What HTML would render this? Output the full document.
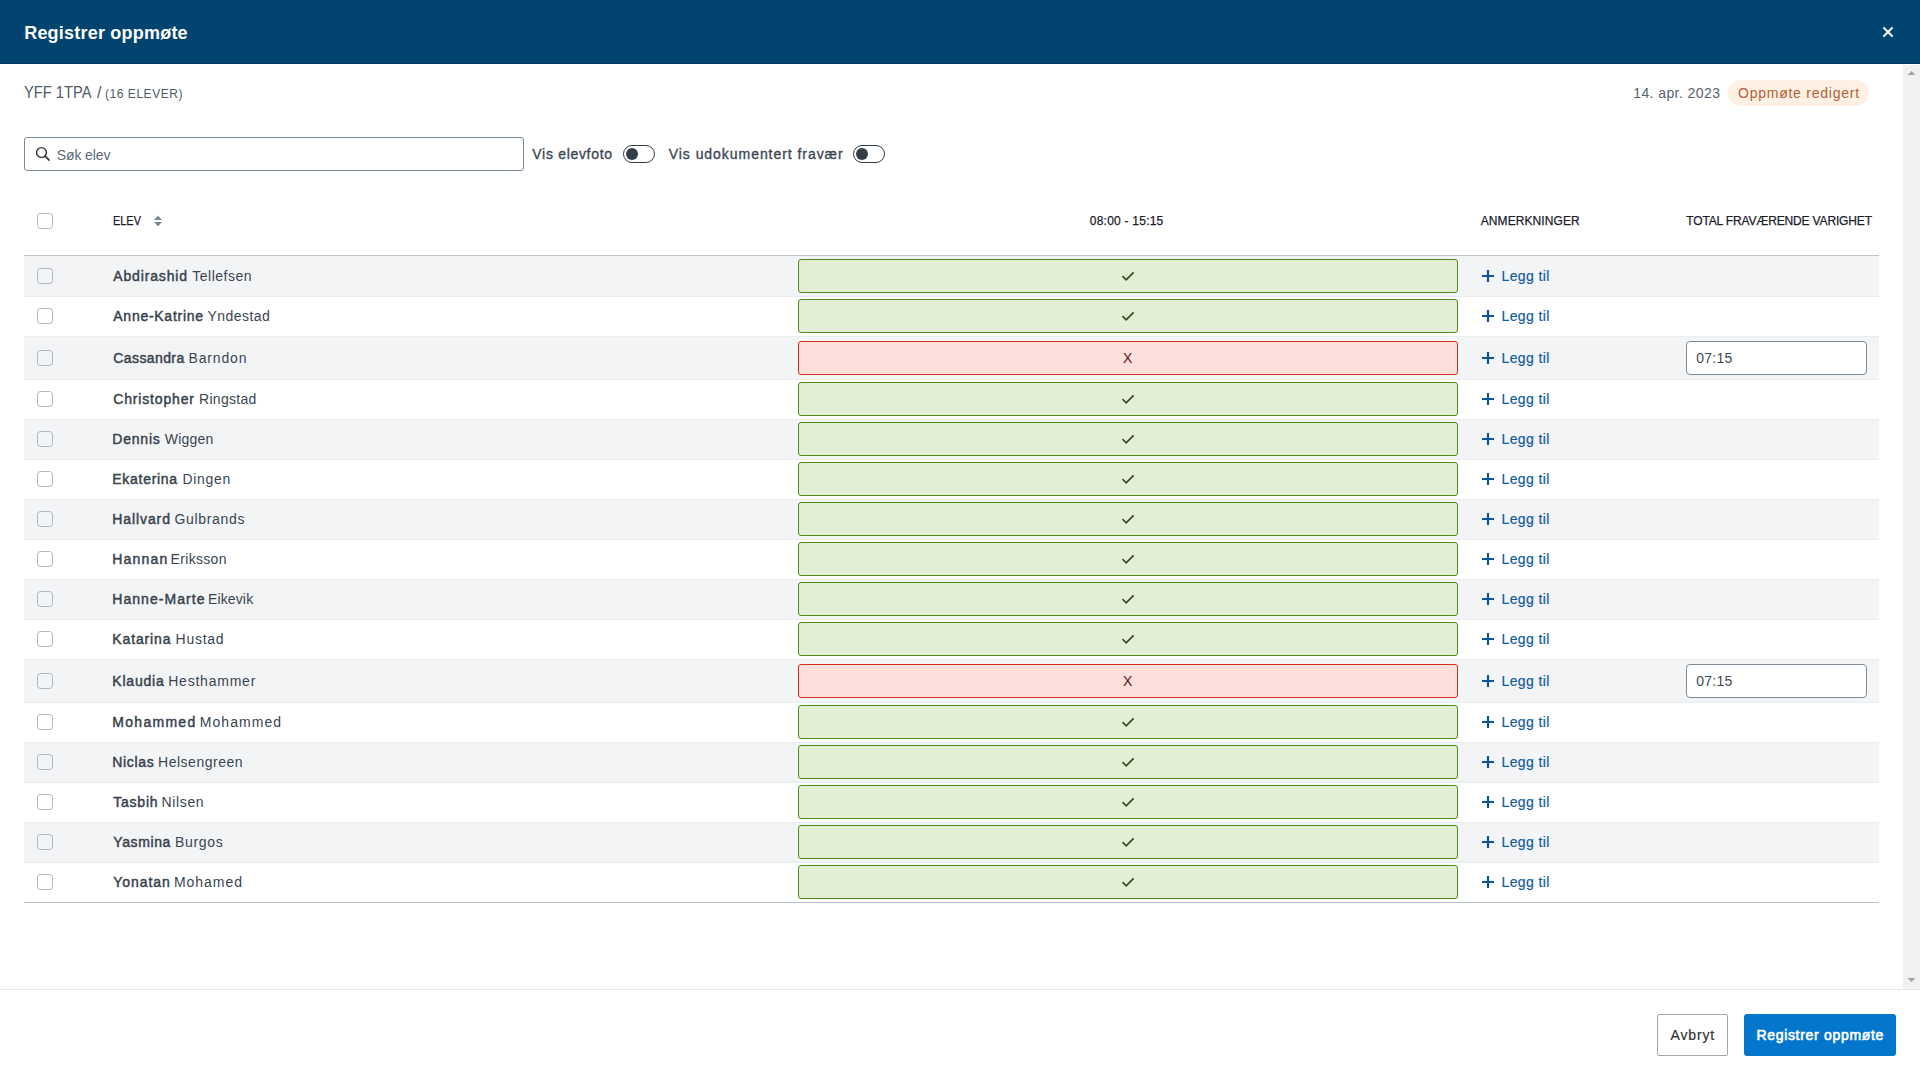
<!DOCTYPE html>
<html><head><meta charset="utf-8"><style>
*{margin:0;padding:0;box-sizing:border-box}
html,body{width:1920px;height:1080px;overflow:hidden;background:#fff;font-family:"Liberation Sans",sans-serif}
.a{position:absolute;white-space:nowrap}
.t{position:absolute;white-space:nowrap;line-height:1}
#hdr{left:0;top:0;width:1920px;height:64px;background:#01446f;border-bottom:1px solid #00335e}
.row{position:absolute;left:24px;width:1855px}
.cb{position:absolute;left:37px;width:16px;height:16px;border:1px solid #b2b6bb;border-radius:3.5px}
.st{position:absolute;left:798px;width:660px;height:34px;border-radius:3px}
.ok{background:#e2efd4;border:1px solid #4e8a16}
.ab{background:#fde0dc;border:1px solid #d3301c}
.inp{position:absolute;left:1686px;width:181px;height:34px;border:1px solid #7d8b99;border-radius:4px;background:#fff}
</style></head><body>
<div id="hdr" class="a"></div>
<div class="t" style="left:24.20px;top:23.76px;font-size:18px;font-weight:bold;letter-spacing:0.213px;color:#fff;">Registrer oppmøte</div>
<svg class="a" style="left:1881px;top:25px" width="14" height="14" viewBox="0 0 14 14"><path d="M3 3L11 11M11 3L3 11" stroke="#fff" stroke-width="2.1" stroke-linecap="round"/></svg>
<div class="t" style="left:24.00px;top:84.96px;font-size:16px;letter-spacing:0.000px;color:#4f5b66;transform:scaleX(0.9181);transform-origin:0 0;">YFF 1TPA</div>
<div class="t" style="left:96.90px;top:84.96px;font-size:16px;letter-spacing:0.000px;color:#4f5b66;">/</div>
<div class="t" style="left:105.00px;top:87.54px;font-size:12px;letter-spacing:0.540px;color:#4f5b66;">(16 ELEVER)</div>
<div class="t" style="left:1633.20px;top:85.85px;font-size:14px;letter-spacing:0.417px;color:#56636e;">14. apr. 2023</div>
<div class="a" style="left:1728px;top:80px;width:141px;height:26px;border-radius:13px;background:#fef1e3"></div>
<div class="t" style="left:1738.00px;top:85.85px;font-size:14px;letter-spacing:0.756px;color:#b0623a;">Oppmøte redigert</div>
<div class="a" style="left:24px;top:137px;width:500px;height:34px;border:1px solid #7a8a9a;border-radius:3px"></div>
<svg class="a" style="left:35px;top:146px" width="16" height="16" viewBox="0 0 16 16"><circle cx="6.5" cy="6.5" r="4.9" fill="none" stroke="#2f3236" stroke-width="1.4"/><path d="M10.1 10.1L14.1 14.1" stroke="#2f3236" stroke-width="1.6" stroke-linecap="round"/></svg>
<div class="t" style="left:56.70px;top:148.15px;font-size:14px;letter-spacing:-0.096px;color:#5b6b79;">Søk elev</div>
<div class="t" style="left:532.30px;top:146.95px;font-size:14px;-webkit-text-stroke:0.35px #3d4954;letter-spacing:0.694px;color:#3d4954;">Vis elevfoto</div>
<div class="a" style="left:623px;top:145px;width:32px;height:18px;border:1.5px solid #323d47;border-radius:9px;background:#fff"></div>
<div class="a" style="left:626px;top:148px;width:12px;height:12px;border-radius:6px;background:#323d47"></div>
<div class="t" style="left:668.75px;top:146.95px;font-size:14px;-webkit-text-stroke:0.35px #3d4954;letter-spacing:0.950px;color:#3d4954;">Vis udokumentert fravær</div>
<div class="a" style="left:853px;top:145px;width:32px;height:18px;border:1.5px solid #323d47;border-radius:9px;background:#fff"></div>
<div class="a" style="left:856px;top:148px;width:12px;height:12px;border-radius:6px;background:#323d47"></div>
<div class="cb a" style="top:213px"></div>
<div class="t" style="left:113.00px;top:214.84px;font-size:12px;-webkit-text-stroke:0.25px #1c1c2b;letter-spacing:0.000px;color:#1c1c2b;transform:scaleX(0.9095);transform-origin:0 0;">ELEV</div>
<svg class="a" style="left:153px;top:215px" width="10" height="12" viewBox="0 0 10 12"><path d="M1 5L5 0.8L9 5Z M1 7L5 11.2L9 7Z" fill="#7b8591"/></svg>
<div class="t" style="left:1089.75px;top:214.64px;font-size:12px;-webkit-text-stroke:0.25px #1c1c2b;letter-spacing:0.234px;color:#1c1c2b;">08:00 - 15:15</div>
<div class="t" style="left:1480.75px;top:214.84px;font-size:12px;-webkit-text-stroke:0.25px #1c1c2b;letter-spacing:0.082px;color:#1c1c2b;">ANMERKNINGER</div>
<div class="t" style="left:1686.25px;top:214.84px;font-size:12px;-webkit-text-stroke:0.25px #1c1c2b;letter-spacing:-0.150px;color:#1c1c2b;">TOTAL FRAVÆRENDE VARIGHET</div>
<div class="a" style="left:24px;top:255px;width:1855px;height:1px;background:#bcc3cb"></div>
<div class="row" style="top:256px;height:40px;background:#f3f4f6"></div>
<div class="cb a" style="top:268px"></div>
<div class="t" style="left:113.30px;top:268.95px;font-size:14px;-webkit-text-stroke:0.45px #37424c;letter-spacing:0.840px;color:#37424c;">Abdirashid</div>
<div class="t" style="left:192.20px;top:268.95px;font-size:14px;letter-spacing:0.525px;color:#3a4550;">Tellefsen</div>
<div class="st a ok" style="top:259px"></div>
<svg class="a" style="left:1120px;top:269.5px" width="16" height="12" viewBox="0 0 16 12"><path d="M2.5 6.2L6.2 9.8L13.6 2.3" fill="none" stroke="#2e4d23" stroke-width="1.7"/></svg>
<svg class="a" style="left:1482px;top:270px" width="12" height="12" viewBox="0 0 12 12"><path d="M6 0V12M0 6H12" stroke="#0b559a" stroke-width="2.2"/></svg>
<div class="t" style="left:1501.50px;top:268.75px;font-size:14px;-webkit-text-stroke:0.2px #115c9e;letter-spacing:0.386px;color:#115c9e;">Legg til</div>
<div class="row" style="top:296px;height:40px;background:#ffffff"></div>
<div class="a" style="left:24px;top:296px;width:1855px;height:1px;background:#ebecee"></div>
<div class="cb a" style="top:308px"></div>
<div class="t" style="left:113.30px;top:308.95px;font-size:14px;-webkit-text-stroke:0.45px #37424c;letter-spacing:0.728px;color:#37424c;">Anne-Katrine</div>
<div class="t" style="left:207.60px;top:308.95px;font-size:14px;letter-spacing:0.433px;color:#3a4550;">Yndestad</div>
<div class="st a ok" style="top:299px"></div>
<svg class="a" style="left:1120px;top:309.5px" width="16" height="12" viewBox="0 0 16 12"><path d="M2.5 6.2L6.2 9.8L13.6 2.3" fill="none" stroke="#2e4d23" stroke-width="1.7"/></svg>
<svg class="a" style="left:1482px;top:310px" width="12" height="12" viewBox="0 0 12 12"><path d="M6 0V12M0 6H12" stroke="#0b559a" stroke-width="2.2"/></svg>
<div class="t" style="left:1501.50px;top:308.75px;font-size:14px;-webkit-text-stroke:0.2px #115c9e;letter-spacing:0.386px;color:#115c9e;">Legg til</div>
<div class="row" style="top:336px;height:43px;background:#f3f4f6"></div>
<div class="a" style="left:24px;top:336px;width:1855px;height:1px;background:#ebecee"></div>
<div class="cb a" style="top:350px"></div>
<div class="t" style="left:113.30px;top:350.95px;font-size:14px;-webkit-text-stroke:0.45px #37424c;letter-spacing:0.398px;color:#37424c;">Cassandra</div>
<div class="t" style="left:188.50px;top:350.95px;font-size:14px;letter-spacing:0.840px;color:#3a4550;">Barndon</div>
<div class="st a ab" style="top:341px"></div>
<div class="t" style="left:1123px;top:351.15px;font-size:14px;color:#5c1414">X</div>
<svg class="a" style="left:1482px;top:352px" width="12" height="12" viewBox="0 0 12 12"><path d="M6 0V12M0 6H12" stroke="#0b559a" stroke-width="2.2"/></svg>
<div class="t" style="left:1501.50px;top:350.75px;font-size:14px;-webkit-text-stroke:0.2px #115c9e;letter-spacing:0.386px;color:#115c9e;">Legg til</div>
<div class="inp a" style="top:341px"></div>
<div class="t" style="left:1696.30px;top:351.15px;font-size:14px;letter-spacing:0.225px;color:#3d4954;">07:15</div>
<div class="row" style="top:379px;height:40px;background:#ffffff"></div>
<div class="a" style="left:24px;top:379px;width:1855px;height:1px;background:#ebecee"></div>
<div class="cb a" style="top:391px"></div>
<div class="t" style="left:113.30px;top:391.95px;font-size:14px;-webkit-text-stroke:0.45px #37424c;letter-spacing:0.828px;color:#37424c;">Christopher</div>
<div class="t" style="left:199.00px;top:391.95px;font-size:14px;letter-spacing:0.305px;color:#3a4550;">Ringstad</div>
<div class="st a ok" style="top:382px"></div>
<svg class="a" style="left:1120px;top:392.5px" width="16" height="12" viewBox="0 0 16 12"><path d="M2.5 6.2L6.2 9.8L13.6 2.3" fill="none" stroke="#2e4d23" stroke-width="1.7"/></svg>
<svg class="a" style="left:1482px;top:393px" width="12" height="12" viewBox="0 0 12 12"><path d="M6 0V12M0 6H12" stroke="#0b559a" stroke-width="2.2"/></svg>
<div class="t" style="left:1501.50px;top:391.75px;font-size:14px;-webkit-text-stroke:0.2px #115c9e;letter-spacing:0.386px;color:#115c9e;">Legg til</div>
<div class="row" style="top:419px;height:40px;background:#f3f4f6"></div>
<div class="a" style="left:24px;top:419px;width:1855px;height:1px;background:#ebecee"></div>
<div class="cb a" style="top:431px"></div>
<div class="t" style="left:112.30px;top:431.95px;font-size:14px;-webkit-text-stroke:0.45px #37424c;letter-spacing:0.792px;color:#37424c;">Dennis</div>
<div class="t" style="left:164.80px;top:431.95px;font-size:14px;letter-spacing:0.180px;color:#3a4550;">Wiggen</div>
<div class="st a ok" style="top:422px"></div>
<svg class="a" style="left:1120px;top:432.5px" width="16" height="12" viewBox="0 0 16 12"><path d="M2.5 6.2L6.2 9.8L13.6 2.3" fill="none" stroke="#2e4d23" stroke-width="1.7"/></svg>
<svg class="a" style="left:1482px;top:433px" width="12" height="12" viewBox="0 0 12 12"><path d="M6 0V12M0 6H12" stroke="#0b559a" stroke-width="2.2"/></svg>
<div class="t" style="left:1501.50px;top:431.75px;font-size:14px;-webkit-text-stroke:0.2px #115c9e;letter-spacing:0.386px;color:#115c9e;">Legg til</div>
<div class="row" style="top:459px;height:40px;background:#ffffff"></div>
<div class="a" style="left:24px;top:459px;width:1855px;height:1px;background:#ebecee"></div>
<div class="cb a" style="top:471px"></div>
<div class="t" style="left:112.30px;top:471.95px;font-size:14px;-webkit-text-stroke:0.45px #37424c;letter-spacing:0.713px;color:#37424c;">Ekaterina</div>
<div class="t" style="left:182.60px;top:471.95px;font-size:14px;letter-spacing:0.648px;color:#3a4550;">Dingen</div>
<div class="st a ok" style="top:462px"></div>
<svg class="a" style="left:1120px;top:472.5px" width="16" height="12" viewBox="0 0 16 12"><path d="M2.5 6.2L6.2 9.8L13.6 2.3" fill="none" stroke="#2e4d23" stroke-width="1.7"/></svg>
<svg class="a" style="left:1482px;top:473px" width="12" height="12" viewBox="0 0 12 12"><path d="M6 0V12M0 6H12" stroke="#0b559a" stroke-width="2.2"/></svg>
<div class="t" style="left:1501.50px;top:471.75px;font-size:14px;-webkit-text-stroke:0.2px #115c9e;letter-spacing:0.386px;color:#115c9e;">Legg til</div>
<div class="row" style="top:499px;height:40px;background:#f3f4f6"></div>
<div class="a" style="left:24px;top:499px;width:1855px;height:1px;background:#ebecee"></div>
<div class="cb a" style="top:511px"></div>
<div class="t" style="left:112.30px;top:511.95px;font-size:14px;-webkit-text-stroke:0.45px #37424c;letter-spacing:0.899px;color:#37424c;">Hallvard</div>
<div class="t" style="left:174.50px;top:511.95px;font-size:14px;letter-spacing:0.675px;color:#3a4550;">Gulbrands</div>
<div class="st a ok" style="top:502px"></div>
<svg class="a" style="left:1120px;top:512.5px" width="16" height="12" viewBox="0 0 16 12"><path d="M2.5 6.2L6.2 9.8L13.6 2.3" fill="none" stroke="#2e4d23" stroke-width="1.7"/></svg>
<svg class="a" style="left:1482px;top:513px" width="12" height="12" viewBox="0 0 12 12"><path d="M6 0V12M0 6H12" stroke="#0b559a" stroke-width="2.2"/></svg>
<div class="t" style="left:1501.50px;top:511.75px;font-size:14px;-webkit-text-stroke:0.2px #115c9e;letter-spacing:0.386px;color:#115c9e;">Legg til</div>
<div class="row" style="top:539px;height:40px;background:#ffffff"></div>
<div class="a" style="left:24px;top:539px;width:1855px;height:1px;background:#ebecee"></div>
<div class="cb a" style="top:551px"></div>
<div class="t" style="left:112.30px;top:551.95px;font-size:14px;-webkit-text-stroke:0.45px #37424c;letter-spacing:1.188px;color:#37424c;">Hannan</div>
<div class="t" style="left:170.60px;top:551.95px;font-size:14px;letter-spacing:0.314px;color:#3a4550;">Eriksson</div>
<div class="st a ok" style="top:542px"></div>
<svg class="a" style="left:1120px;top:552.5px" width="16" height="12" viewBox="0 0 16 12"><path d="M2.5 6.2L6.2 9.8L13.6 2.3" fill="none" stroke="#2e4d23" stroke-width="1.7"/></svg>
<svg class="a" style="left:1482px;top:553px" width="12" height="12" viewBox="0 0 12 12"><path d="M6 0V12M0 6H12" stroke="#0b559a" stroke-width="2.2"/></svg>
<div class="t" style="left:1501.50px;top:551.75px;font-size:14px;-webkit-text-stroke:0.2px #115c9e;letter-spacing:0.386px;color:#115c9e;">Legg til</div>
<div class="row" style="top:579px;height:40px;background:#f3f4f6"></div>
<div class="a" style="left:24px;top:579px;width:1855px;height:1px;background:#ebecee"></div>
<div class="cb a" style="top:591px"></div>
<div class="t" style="left:112.30px;top:591.95px;font-size:14px;-webkit-text-stroke:0.45px #37424c;letter-spacing:1.044px;color:#37424c;">Hanne-Marte</div>
<div class="t" style="left:207.90px;top:591.95px;font-size:14px;letter-spacing:0.150px;color:#3a4550;">Eikevik</div>
<div class="st a ok" style="top:582px"></div>
<svg class="a" style="left:1120px;top:592.5px" width="16" height="12" viewBox="0 0 16 12"><path d="M2.5 6.2L6.2 9.8L13.6 2.3" fill="none" stroke="#2e4d23" stroke-width="1.7"/></svg>
<svg class="a" style="left:1482px;top:593px" width="12" height="12" viewBox="0 0 12 12"><path d="M6 0V12M0 6H12" stroke="#0b559a" stroke-width="2.2"/></svg>
<div class="t" style="left:1501.50px;top:591.75px;font-size:14px;-webkit-text-stroke:0.2px #115c9e;letter-spacing:0.386px;color:#115c9e;">Legg til</div>
<div class="row" style="top:619px;height:40px;background:#ffffff"></div>
<div class="a" style="left:24px;top:619px;width:1855px;height:1px;background:#ebecee"></div>
<div class="cb a" style="top:631px"></div>
<div class="t" style="left:112.30px;top:631.95px;font-size:14px;-webkit-text-stroke:0.45px #37424c;letter-spacing:0.868px;color:#37424c;">Katarina</div>
<div class="t" style="left:175.60px;top:631.95px;font-size:14px;letter-spacing:0.720px;color:#3a4550;">Hustad</div>
<div class="st a ok" style="top:622px"></div>
<svg class="a" style="left:1120px;top:632.5px" width="16" height="12" viewBox="0 0 16 12"><path d="M2.5 6.2L6.2 9.8L13.6 2.3" fill="none" stroke="#2e4d23" stroke-width="1.7"/></svg>
<svg class="a" style="left:1482px;top:633px" width="12" height="12" viewBox="0 0 12 12"><path d="M6 0V12M0 6H12" stroke="#0b559a" stroke-width="2.2"/></svg>
<div class="t" style="left:1501.50px;top:631.75px;font-size:14px;-webkit-text-stroke:0.2px #115c9e;letter-spacing:0.386px;color:#115c9e;">Legg til</div>
<div class="row" style="top:659px;height:43px;background:#f3f4f6"></div>
<div class="a" style="left:24px;top:659px;width:1855px;height:1px;background:#ebecee"></div>
<div class="cb a" style="top:673px"></div>
<div class="t" style="left:112.30px;top:673.95px;font-size:14px;-webkit-text-stroke:0.45px #37424c;letter-spacing:0.798px;color:#37424c;">Klaudia</div>
<div class="t" style="left:168.20px;top:673.95px;font-size:14px;letter-spacing:0.780px;color:#3a4550;">Hesthammer</div>
<div class="st a ab" style="top:664px"></div>
<div class="t" style="left:1123px;top:674.15px;font-size:14px;color:#5c1414">X</div>
<svg class="a" style="left:1482px;top:675px" width="12" height="12" viewBox="0 0 12 12"><path d="M6 0V12M0 6H12" stroke="#0b559a" stroke-width="2.2"/></svg>
<div class="t" style="left:1501.50px;top:673.75px;font-size:14px;-webkit-text-stroke:0.2px #115c9e;letter-spacing:0.386px;color:#115c9e;">Legg til</div>
<div class="inp a" style="top:664px"></div>
<div class="t" style="left:1696.30px;top:674.15px;font-size:14px;letter-spacing:0.225px;color:#3d4954;">07:15</div>
<div class="row" style="top:702px;height:40px;background:#ffffff"></div>
<div class="a" style="left:24px;top:702px;width:1855px;height:1px;background:#ebecee"></div>
<div class="cb a" style="top:714px"></div>
<div class="t" style="left:112.30px;top:714.95px;font-size:14px;-webkit-text-stroke:0.45px #37424c;letter-spacing:1.285px;color:#37424c;">Mohammed</div>
<div class="t" style="left:199.80px;top:714.95px;font-size:14px;letter-spacing:1.044px;color:#3a4550;">Mohammed</div>
<div class="st a ok" style="top:705px"></div>
<svg class="a" style="left:1120px;top:715.5px" width="16" height="12" viewBox="0 0 16 12"><path d="M2.5 6.2L6.2 9.8L13.6 2.3" fill="none" stroke="#2e4d23" stroke-width="1.7"/></svg>
<svg class="a" style="left:1482px;top:716px" width="12" height="12" viewBox="0 0 12 12"><path d="M6 0V12M0 6H12" stroke="#0b559a" stroke-width="2.2"/></svg>
<div class="t" style="left:1501.50px;top:714.75px;font-size:14px;-webkit-text-stroke:0.2px #115c9e;letter-spacing:0.386px;color:#115c9e;">Legg til</div>
<div class="row" style="top:742px;height:40px;background:#f3f4f6"></div>
<div class="a" style="left:24px;top:742px;width:1855px;height:1px;background:#ebecee"></div>
<div class="cb a" style="top:754px"></div>
<div class="t" style="left:112.30px;top:754.95px;font-size:14px;-webkit-text-stroke:0.45px #37424c;letter-spacing:0.648px;color:#37424c;">Niclas</div>
<div class="t" style="left:158.10px;top:754.95px;font-size:14px;letter-spacing:0.504px;color:#3a4550;">Helsengreen</div>
<div class="st a ok" style="top:745px"></div>
<svg class="a" style="left:1120px;top:755.5px" width="16" height="12" viewBox="0 0 16 12"><path d="M2.5 6.2L6.2 9.8L13.6 2.3" fill="none" stroke="#2e4d23" stroke-width="1.7"/></svg>
<svg class="a" style="left:1482px;top:756px" width="12" height="12" viewBox="0 0 12 12"><path d="M6 0V12M0 6H12" stroke="#0b559a" stroke-width="2.2"/></svg>
<div class="t" style="left:1501.50px;top:754.75px;font-size:14px;-webkit-text-stroke:0.2px #115c9e;letter-spacing:0.386px;color:#115c9e;">Legg til</div>
<div class="row" style="top:782px;height:40px;background:#ffffff"></div>
<div class="a" style="left:24px;top:782px;width:1855px;height:1px;background:#ebecee"></div>
<div class="cb a" style="top:794px"></div>
<div class="t" style="left:113.30px;top:794.95px;font-size:14px;-webkit-text-stroke:0.45px #37424c;letter-spacing:0.756px;color:#37424c;">Tasbih</div>
<div class="t" style="left:161.50px;top:794.95px;font-size:14px;letter-spacing:0.648px;color:#3a4550;">Nilsen</div>
<div class="st a ok" style="top:785px"></div>
<svg class="a" style="left:1120px;top:795.5px" width="16" height="12" viewBox="0 0 16 12"><path d="M2.5 6.2L6.2 9.8L13.6 2.3" fill="none" stroke="#2e4d23" stroke-width="1.7"/></svg>
<svg class="a" style="left:1482px;top:796px" width="12" height="12" viewBox="0 0 12 12"><path d="M6 0V12M0 6H12" stroke="#0b559a" stroke-width="2.2"/></svg>
<div class="t" style="left:1501.50px;top:794.75px;font-size:14px;-webkit-text-stroke:0.2px #115c9e;letter-spacing:0.386px;color:#115c9e;">Legg til</div>
<div class="row" style="top:822px;height:40px;background:#f3f4f6"></div>
<div class="a" style="left:24px;top:822px;width:1855px;height:1px;background:#ebecee"></div>
<div class="cb a" style="top:834px"></div>
<div class="t" style="left:113.30px;top:834.95px;font-size:14px;-webkit-text-stroke:0.45px #37424c;letter-spacing:0.600px;color:#37424c;">Yasmina</div>
<div class="t" style="left:175.10px;top:834.95px;font-size:14px;letter-spacing:0.648px;color:#3a4550;">Burgos</div>
<div class="st a ok" style="top:825px"></div>
<svg class="a" style="left:1120px;top:835.5px" width="16" height="12" viewBox="0 0 16 12"><path d="M2.5 6.2L6.2 9.8L13.6 2.3" fill="none" stroke="#2e4d23" stroke-width="1.7"/></svg>
<svg class="a" style="left:1482px;top:836px" width="12" height="12" viewBox="0 0 12 12"><path d="M6 0V12M0 6H12" stroke="#0b559a" stroke-width="2.2"/></svg>
<div class="t" style="left:1501.50px;top:834.75px;font-size:14px;-webkit-text-stroke:0.2px #115c9e;letter-spacing:0.386px;color:#115c9e;">Legg til</div>
<div class="row" style="top:862px;height:40px;background:#ffffff"></div>
<div class="a" style="left:24px;top:862px;width:1855px;height:1px;background:#ebecee"></div>
<div class="cb a" style="top:874px"></div>
<div class="t" style="left:113.30px;top:874.95px;font-size:14px;-webkit-text-stroke:0.45px #37424c;letter-spacing:0.930px;color:#37424c;">Yonatan</div>
<div class="t" style="left:174.00px;top:874.95px;font-size:14px;letter-spacing:0.960px;color:#3a4550;">Mohamed</div>
<div class="st a ok" style="top:865px"></div>
<svg class="a" style="left:1120px;top:875.5px" width="16" height="12" viewBox="0 0 16 12"><path d="M2.5 6.2L6.2 9.8L13.6 2.3" fill="none" stroke="#2e4d23" stroke-width="1.7"/></svg>
<svg class="a" style="left:1482px;top:876px" width="12" height="12" viewBox="0 0 12 12"><path d="M6 0V12M0 6H12" stroke="#0b559a" stroke-width="2.2"/></svg>
<div class="t" style="left:1501.50px;top:874.75px;font-size:14px;-webkit-text-stroke:0.2px #115c9e;letter-spacing:0.386px;color:#115c9e;">Legg til</div>
<div class="a" style="left:24px;top:902px;width:1855px;height:1px;background:#b8c0c9"></div>
<div class="a" style="left:1903px;top:65px;width:17px;height:924px;background:#f1f1f1"></div>
<svg class="a" style="left:1907px;top:70px" width="9" height="6" viewBox="0 0 9 6"><path d="M0.5 5L4.5 1L8.5 5Z" fill="#a3a3a3"/></svg>
<svg class="a" style="left:1907px;top:977px" width="9" height="6" viewBox="0 0 9 6"><path d="M0.5 1L4.5 5L8.5 1Z" fill="#a3a3a3"/></svg>
<div class="a" style="left:0;top:989px;width:1920px;height:1px;background:#e6e6e6"></div>
<div class="a" style="left:1657px;top:1014px;width:71px;height:42px;border:1px solid #a6a6a6;border-radius:2px;background:#fff"></div>
<div class="t" style="left:1670.60px;top:1027.95px;font-size:14px;-webkit-text-stroke:0.2px #333;letter-spacing:0.828px;color:#333;">Avbryt</div>
<div class="a" style="left:1744px;top:1014px;width:152px;height:42px;border-radius:3px;background:#0477cc"></div>
<div class="t" style="left:1756.40px;top:1027.95px;font-size:14px;-webkit-text-stroke:0.6px #fff;letter-spacing:0.688px;color:#fff;">Registrer oppmøte</div>
</body></html>
